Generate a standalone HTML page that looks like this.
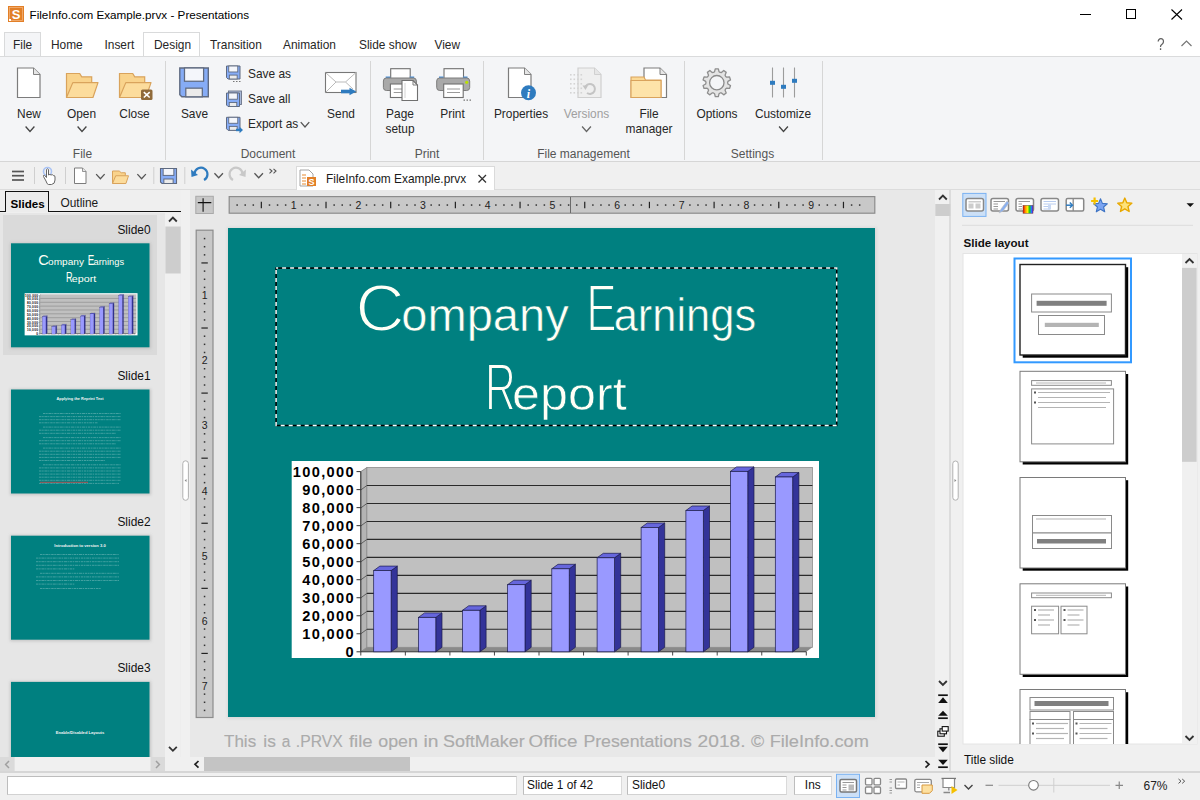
<!DOCTYPE html>
<html><head><meta charset="utf-8"><style>
html,body{margin:0;padding:0;width:1200px;height:800px;overflow:hidden;background:#f0f0f0}
body{position:relative;font-family:"Liberation Sans",sans-serif}
.t{position:absolute;white-space:nowrap}
.r{position:absolute}
svg.r{overflow:visible}
</style></head><body>
<div class="r" style="left:0px;top:0px;width:1200px;height:56px;background:#fff"></div>
<div class="t" style="left:29.5px;top:8.50px;font-size:11.7px;line-height:11.7px;color:#000;font-weight:normal;">FileInfo.com Example.prvx - Presentations</div>
<div class="r" style="left:1080px;top:14px;width:11px;height:1px;background:#000"></div>
<div class="r" style="left:1126px;top:9px;width:10px;height:10px;border:1px solid #000;box-sizing:border-box"></div>
<svg class="r" style="left:1171px;top:9px" width="12" height="11"><path d="M0.5 0.5 L11 10.5 M11 0.5 L0.5 10.5" stroke="#000" stroke-width="1.1" fill="none"/></svg>
<div class="r" style="left:3.5px;top:32px;width:37px;height:25px;background:#f4f5f7;border:1px solid #d9dadb;border-bottom:none;box-sizing:border-box"></div>
<div class="r" style="left:143px;top:32px;width:57px;height:25px;background:#fff;border:1px solid #d9dadb;border-bottom:none;box-sizing:border-box"></div>
<div class="t" style="left:13px;top:39.73px;font-size:11.9px;line-height:11.9px;color:#262626;font-weight:normal;">File</div>
<div class="t" style="left:51px;top:39.73px;font-size:11.9px;line-height:11.9px;color:#262626;font-weight:normal;">Home</div>
<div class="t" style="left:104.5px;top:39.73px;font-size:11.9px;line-height:11.9px;color:#262626;font-weight:normal;">Insert</div>
<div class="t" style="left:154px;top:39.73px;font-size:11.9px;line-height:11.9px;color:#262626;font-weight:normal;">Design</div>
<div class="t" style="left:210px;top:39.73px;font-size:11.9px;line-height:11.9px;color:#262626;font-weight:normal;">Transition</div>
<div class="t" style="left:283px;top:39.73px;font-size:11.9px;line-height:11.9px;color:#262626;font-weight:normal;">Animation</div>
<div class="t" style="left:359px;top:39.73px;font-size:11.9px;line-height:11.9px;color:#262626;font-weight:normal;">Slide show</div>
<div class="t" style="left:434.5px;top:39.73px;font-size:11.9px;line-height:11.9px;color:#262626;font-weight:normal;">View</div>
<div class="t" style="left:1157.3px;top:36.66px;font-size:16px;line-height:16px;color:#606060;font-weight:normal;transform:scaleX(0.85);transform-origin:0 0">?</div>
<svg class="r" style="left:1181px;top:40px" width="11" height="7"><path d="M0.5 6 L5.5 1 L10.5 6" stroke="#777" stroke-width="1.2" fill="none"/></svg>
<div class="r" style="left:0px;top:56px;width:1200px;height:106px;background:#f4f5f7;border-top:1px solid #dadbdc;border-bottom:1px solid #d6d6d6;box-sizing:border-box"></div>
<div class="r" style="left:164.5px;top:61px;width:1px;height:99px;background:#d6d6d6"></div>
<div class="r" style="left:370px;top:61px;width:1px;height:99px;background:#d6d6d6"></div>
<div class="r" style="left:482.5px;top:61px;width:1px;height:99px;background:#d6d6d6"></div>
<div class="r" style="left:684.2px;top:61px;width:1px;height:99px;background:#d6d6d6"></div>
<div class="r" style="left:822px;top:61px;width:1px;height:99px;background:#d6d6d6"></div>
<div class="t" style="left:-117.5px;width:400px;text-align:center;top:147.84px;font-size:12px;line-height:12px;color:#555;font-weight:normal;">File</div>
<div class="t" style="left:68px;width:400px;text-align:center;top:147.84px;font-size:12px;line-height:12px;color:#555;font-weight:normal;">Document</div>
<div class="t" style="left:227px;width:400px;text-align:center;top:147.84px;font-size:12px;line-height:12px;color:#555;font-weight:normal;">Print</div>
<div class="t" style="left:383.5px;width:400px;text-align:center;top:147.84px;font-size:12px;line-height:12px;color:#555;font-weight:normal;">File management</div>
<div class="t" style="left:552.5px;width:400px;text-align:center;top:147.84px;font-size:12px;line-height:12px;color:#555;font-weight:normal;">Settings</div>
<div class="t" style="left:-171px;width:400px;text-align:center;top:108.93px;font-size:11.9px;line-height:11.9px;color:#262626;font-weight:normal;">New</div>
<div class="t" style="left:-118.5px;width:400px;text-align:center;top:108.93px;font-size:11.9px;line-height:11.9px;color:#262626;font-weight:normal;">Open</div>
<div class="t" style="left:-65.5px;width:400px;text-align:center;top:108.93px;font-size:11.9px;line-height:11.9px;color:#262626;font-weight:normal;">Close</div>
<div class="t" style="left:-5.5px;width:400px;text-align:center;top:108.93px;font-size:11.9px;line-height:11.9px;color:#262626;font-weight:normal;">Save</div>
<div class="t" style="left:141px;width:400px;text-align:center;top:108.93px;font-size:11.9px;line-height:11.9px;color:#262626;font-weight:normal;">Send</div>
<div class="t" style="left:200px;width:400px;text-align:center;top:108.93px;font-size:11.9px;line-height:11.9px;color:#262626;font-weight:normal;">Page</div>
<div class="t" style="left:200px;width:400px;text-align:center;top:124.43px;font-size:11.9px;line-height:11.9px;color:#262626;font-weight:normal;">setup</div>
<div class="t" style="left:252.5px;width:400px;text-align:center;top:108.93px;font-size:11.9px;line-height:11.9px;color:#262626;font-weight:normal;">Print</div>
<div class="t" style="left:321px;width:400px;text-align:center;top:108.93px;font-size:11.9px;line-height:11.9px;color:#262626;font-weight:normal;">Properties</div>
<div class="t" style="left:386.5px;width:400px;text-align:center;top:108.93px;font-size:11.9px;line-height:11.9px;color:#a0a0a0;font-weight:normal;">Versions</div>
<div class="t" style="left:449px;width:400px;text-align:center;top:108.93px;font-size:11.9px;line-height:11.9px;color:#262626;font-weight:normal;">File</div>
<div class="t" style="left:449px;width:400px;text-align:center;top:124.43px;font-size:11.9px;line-height:11.9px;color:#262626;font-weight:normal;">manager</div>
<div class="t" style="left:517px;width:400px;text-align:center;top:108.93px;font-size:11.9px;line-height:11.9px;color:#262626;font-weight:normal;">Options</div>
<div class="t" style="left:583px;width:400px;text-align:center;top:108.93px;font-size:11.9px;line-height:11.9px;color:#262626;font-weight:normal;">Customize</div>
<div class="t" style="left:248px;top:68.93px;font-size:11.9px;line-height:11.9px;color:#262626;font-weight:normal;">Save as</div>
<div class="t" style="left:248px;top:93.93px;font-size:11.9px;line-height:11.9px;color:#262626;font-weight:normal;">Save all</div>
<div class="t" style="left:248px;top:118.93px;font-size:11.9px;line-height:11.9px;color:#262626;font-weight:normal;">Export as</div>
<div class="r" style="left:0px;top:162px;width:1200px;height:28px;background:#f0f0f0;border-bottom:1px solid #dcdcdc;box-sizing:border-box"></div>
<svg class="r" style="left:0;top:0" width="1200" height="800">
<rect x="8" y="6" width="16" height="16" fill="#e27f27"/>
<rect x="9.5" y="7.5" width="13" height="13" fill="none" stroke="#f2b27a" stroke-width="0.8"/>
<text x="16" y="19" font-family="Liberation Sans" font-weight="bold" font-size="13" fill="#fff" text-anchor="middle">S</text>
<rect x="9" y="19" width="2" height="2" fill="#fff"/>
<path d="M17.5 68 H33.5 L40.0 74.5 V97.5 H17.5 Z" fill="#fff" stroke="#7c7c7c" stroke-width="1.2"/><path d="M33.5 68 V74.5 H40.0" fill="#e6e6e6" stroke="#7c7c7c" stroke-width="0.96"/>
<path d="M25.60 126.50 L30.00 131.50 L34.40 126.50" stroke="#444" stroke-width="1.3" fill="none"/>
<path d="M66.5 97.5 V73.5 H79.73 L81.73 76.86 H91.7 V82.62" fill="#f9d38c" stroke="#d9a35c" stroke-width="1.2"/><path d="M66.5 97.5 L72.80 82.62 H98.0 L92.96 97.5 Z" fill="#fcdc9c" stroke="#d9a35c" stroke-width="1.2" stroke-linejoin="round"/>
<path d="M77.60 126.50 L82.00 131.50 L86.40 126.50" stroke="#444" stroke-width="1.3" fill="none"/>
<path d="M119.5 97.5 V73.5 H132.73 L134.73 76.86 H144.7 V82.62" fill="#f9d38c" stroke="#d9a35c" stroke-width="1.2"/><path d="M119.5 97.5 L125.80 82.62 H151.0 L145.96 97.5 Z" fill="#fcdc9c" stroke="#d9a35c" stroke-width="1.2" stroke-linejoin="round"/>
<rect x="141" y="89.5" width="11.5" height="10.5" rx="1.5" fill="#8f6a3a"/>
<path d="M143.8 92.2 L149.7 97.5 M149.7 92.2 L143.8 97.5" stroke="#fff" stroke-width="1.6"/>
<path d="M179.8 68 H208.3 V96.8 H181.8 L179.8 94.8 Z" fill="#86acf6" stroke="#5f6a80" stroke-width="1.4"/><rect x="184.50" y="68" width="19.10" height="13.25" fill="#f4f6fb" stroke="#5f6a80" stroke-width="1.26"/><rect x="185.79" y="88.16" width="16.53" height="8.64" fill="#ebebeb" stroke="#5f6a80" stroke-width="1.26"/>
<path d="M226.5 66 H240.0 V79 H228.0 L226.5 77.5 Z" fill="#86acf6" stroke="#5f6a80" stroke-width="1"/><rect x="228.73" y="66" width="9.04" height="5.98" fill="#f4f6fb" stroke="#5f6a80" stroke-width="0.9"/><rect x="229.34" y="75.10" width="7.83" height="3.90" fill="#ebebeb" stroke="#5f6a80" stroke-width="0.9"/>
<path d="M233 81.5 H234.5 M236 81.5 H237.5 M239 81.5 H240.5" stroke="#777" stroke-width="1.2"/>
<rect x="228.5" y="91" width="13" height="13.5" fill="#a9b9d8" stroke="#6b7488" stroke-width="0.9"/>
<path d="M226.5 93 H239.5 V106.5 H228.0 L226.5 105.0 Z" fill="#86acf6" stroke="#5f6a80" stroke-width="1"/><rect x="228.65" y="93" width="8.71" height="6.21" fill="#f4f6fb" stroke="#5f6a80" stroke-width="0.9"/><rect x="229.23" y="102.45" width="7.54" height="4.05" fill="#ebebeb" stroke="#5f6a80" stroke-width="0.9"/>
<path d="M226.5 117.3 H240.0 V130.3 H228.0 L226.5 128.8 Z" fill="#86acf6" stroke="#5f6a80" stroke-width="1"/><rect x="228.73" y="117.3" width="9.04" height="5.98" fill="#f4f6fb" stroke="#5f6a80" stroke-width="0.9"/><rect x="229.34" y="126.40" width="7.83" height="3.90" fill="#ebebeb" stroke="#5f6a80" stroke-width="0.9"/>
<path d="M236 130 H240" stroke="#2e7bbf" stroke-width="2.4"/><path d="M239.5 126.8 L243 130 L239.5 133.2 Z" fill="#2e7bbf"/>
<path d="M300.75 122.10 L305.00 126.90 L309.25 122.10" stroke="#555" stroke-width="1.3" fill="none"/>
<rect x="325.5" y="72.5" width="30.5" height="20" fill="#fff" stroke="#777" stroke-width="1.1"/>
<path d="M325.5 72.5 L336 82 H345.5 L356 72.5 M325.5 92.5 L336 82 M345.5 82 L353 89" stroke="#bbb" stroke-width="1" fill="none"/>
<path d="M341 91.5 H350" stroke="#2e7bbf" stroke-width="3.6"/><path d="M349.5 87.8 L356.3 91.5 L349.5 95.3 Z" fill="#2e7bbf"/>
<rect x="390.7" y="68.7" width="19.5" height="10" fill="#fff" stroke="#707070" stroke-width="1.1"/><rect x="385.7" y="76.5" width="4.5" height="2.5" fill="#4a8fd8"/><rect x="409.7" y="76.5" width="4.5" height="2.5" fill="#4a8fd8"/><rect x="383.4" y="78" width="33" height="12.5" rx="3" fill="#a9a9a9" stroke="#7d7d7d" stroke-width="1"/><rect x="390.4" y="84" width="19.5" height="13.5" fill="#fff" stroke="#707070" stroke-width="1.1"/><path d="M393.7 89 H406.7 M393.7 92.5 H406.7" stroke="#9a9a9a" stroke-width="1"/>
<path d="M402 80.5 H413 L417.5 85 V100.5 H402 Z" fill="#fff" stroke="#707070" stroke-width="1.1"/><path d="M413 80.5 V85 H417.5" fill="none" stroke="#707070" stroke-width="0.9"/><path d="M405 83 V98" stroke="#c8c8c8" stroke-width="0.8"/>
<rect x="444" y="68.7" width="19.5" height="10" fill="#fff" stroke="#707070" stroke-width="1.1"/><rect x="439" y="76.5" width="4.5" height="2.5" fill="#4a8fd8"/><rect x="463" y="76.5" width="4.5" height="2.5" fill="#4a8fd8"/><rect x="436.7" y="78" width="33" height="12.5" rx="3" fill="#a9a9a9" stroke="#7d7d7d" stroke-width="1"/><rect x="443.7" y="84" width="19.5" height="13.5" fill="#fff" stroke="#707070" stroke-width="1.1"/><path d="M447 89 H460 M447 92.5 H460" stroke="#9a9a9a" stroke-width="1"/><circle cx="466.7" cy="82.3" r="1.6" fill="#b8e000"/>
<path d="M463.5 100.2 H465 M466.5 100.2 H468 M469.5 100.2 H471" stroke="#777" stroke-width="1.2"/>
<path d="M508.5 68 H524.5 L531.0 74.5 V97.5 H508.5 Z" fill="#fff" stroke="#7c7c7c" stroke-width="1.2"/><path d="M524.5 68 V74.5 H531.0" fill="#e6e6e6" stroke="#7c7c7c" stroke-width="0.96"/>
<circle cx="528.5" cy="92.7" r="7.5" fill="#2e7bbf"/>
<text x="528.3" y="97.8" font-family="Liberation Serif" font-style="italic" font-weight="bold" font-size="12" fill="#fff" text-anchor="middle">i</text>
<path d="M578 68 H594.5 L601 74.5 V97.5 H578 Z" fill="#efefef" stroke="#cfcfcf" stroke-width="1.2"/><path d="M594.5 68 V74.5 H601" fill="#e6e6e6" stroke="#cfcfcf" stroke-width="0.96"/>
<rect x="570.0" y="74.0" width="1.6" height="1.6" fill="#d4d4d4"/>
<rect x="570.0" y="78.5" width="1.6" height="1.6" fill="#d4d4d4"/>
<rect x="570.0" y="83.0" width="1.6" height="1.6" fill="#d4d4d4"/>
<rect x="570.0" y="87.5" width="1.6" height="1.6" fill="#d4d4d4"/>
<rect x="570.0" y="92.0" width="1.6" height="1.6" fill="#d4d4d4"/>
<rect x="573.5" y="74.0" width="1.6" height="1.6" fill="#d4d4d4"/>
<rect x="573.5" y="78.5" width="1.6" height="1.6" fill="#d4d4d4"/>
<rect x="573.5" y="83.0" width="1.6" height="1.6" fill="#d4d4d4"/>
<rect x="573.5" y="87.5" width="1.6" height="1.6" fill="#d4d4d4"/>
<rect x="573.5" y="92.0" width="1.6" height="1.6" fill="#d4d4d4"/>
<rect x="577.0" y="74.0" width="1.6" height="1.6" fill="#d4d4d4"/>
<rect x="577.0" y="78.5" width="1.6" height="1.6" fill="#d4d4d4"/>
<rect x="577.0" y="83.0" width="1.6" height="1.6" fill="#d4d4d4"/>
<rect x="577.0" y="87.5" width="1.6" height="1.6" fill="#d4d4d4"/>
<rect x="577.0" y="92.0" width="1.6" height="1.6" fill="#d4d4d4"/>
<rect x="580.5" y="74.0" width="1.6" height="1.6" fill="#d4d4d4"/>
<rect x="580.5" y="78.5" width="1.6" height="1.6" fill="#d4d4d4"/>
<rect x="580.5" y="83.0" width="1.6" height="1.6" fill="#d4d4d4"/>
<rect x="580.5" y="87.5" width="1.6" height="1.6" fill="#d4d4d4"/>
<rect x="580.5" y="92.0" width="1.6" height="1.6" fill="#d4d4d4"/>
<path d="M585 88 A5 5 0 1 1 587 93" stroke="#c4c4c4" stroke-width="2" fill="none"/><path d="M582.5 85.5 L585.5 90 L588 85.5 Z" fill="#c4c4c4"/>
<path d="M582.10 126.50 L586.50 131.50 L590.90 126.50" stroke="#666" stroke-width="1.3" fill="none"/>
<path d="M644 68 H660.0 L666.5 74.5 V97.5 H644 Z" fill="#fff" stroke="#7c7c7c" stroke-width="1.2"/><path d="M660.0 68 V74.5 H666.5" fill="#e6e6e6" stroke="#7c7c7c" stroke-width="0.96"/>
<path d="M631 97.5 V77 H644 L645.5 80 H661 V97.5 Z" fill="#fbd996" stroke="#d9a35c" stroke-width="1.1"/>
<path d="M631 97.5 V80.5 H661 V97.5 Z" fill="#fde3a9" stroke="#d9a35c" stroke-width="1.1"/>
<polygon points="713.46,72.43 714.57,71.72 715.26,68.78 718.34,68.78 719.03,71.72 720.14,72.43 721.45,72.51 723.74,70.54 726.22,72.35 725.05,75.13 725.54,76.35 726.55,77.19 729.56,76.94 730.51,79.86 727.93,81.42 727.60,82.70 727.93,83.98 730.51,85.54 729.56,88.46 726.55,88.21 725.54,89.05 725.05,90.27 726.22,93.05 723.74,94.86 721.45,92.89 720.14,92.97 719.03,93.68 718.34,96.62 715.26,96.62 714.57,93.68 713.46,92.97 712.15,92.89 709.86,94.86 707.38,93.05 708.55,90.27 708.06,89.05 707.05,88.21 704.04,88.46 703.09,85.54 705.67,83.98 706.00,82.70 705.67,81.42 703.09,79.86 704.04,76.94 707.05,77.19 708.06,76.35 708.55,75.13 707.38,72.35 709.86,70.54 712.15,72.51" fill="#e4e4e4" stroke="#8e8e8e" stroke-width="1.3" stroke-linejoin="round"/>
<circle cx="716.8" cy="82.7" r="7.2" fill="#f4f5f7" stroke="#8a8a8a" stroke-width="1.3"/>
<path d="M772.5 67.5 V97.5" stroke="#9c9c9c" stroke-width="1.1"/><rect x="770.0" y="80.8" width="5" height="4" fill="#2e7bbf"/>
<path d="M783.5 67.5 V97.5" stroke="#9c9c9c" stroke-width="1.1"/><rect x="781.0" y="84.8" width="5" height="4" fill="#2e7bbf"/>
<path d="M794.5 67.5 V97.5" stroke="#9c9c9c" stroke-width="1.1"/><rect x="792.0" y="78.8" width="5" height="4" fill="#2e7bbf"/>
<path d="M779.10 126.50 L783.50 131.50 L787.90 126.50" stroke="#444" stroke-width="1.3" fill="none"/>
<path d="M12 171.5 H24" stroke="#555" stroke-width="1.7"/>
<path d="M12 175.7 H24" stroke="#555" stroke-width="1.7"/>
<path d="M12 180 H24" stroke="#555" stroke-width="1.7"/>
<path d="M34.5 167 V184" stroke="#cfcfcf" stroke-width="1"/>
<path d="M65.5 167 V184" stroke="#cfcfcf" stroke-width="1"/>
<path d="M153.8 167 V184" stroke="#cfcfcf" stroke-width="1"/>
<path d="M184.8 167 V184" stroke="#cfcfcf" stroke-width="1"/>
<circle cx="47.5" cy="171.5" r="4" fill="none" stroke="#a9c3f5" stroke-width="1.6"/>
<path d="M46 181 L43.5 176.5 Q43 175 44.5 175.3 L46.5 177.5 V169.5 Q47.5 168 48.5 169.5 V175 Q50 173.8 51 175 Q52.5 174 53.3 175.5 Q55 175.2 55 177 V180 Q55 184 51.5 184.5 H48.5 Q47 184.5 46 181 Z" fill="#fff" stroke="#666" stroke-width="1"/>
<path d="M74.5 168 H82.5 L86.0 171.5 V183.5 H74.5 Z" fill="#fff" stroke="#7c7c7c" stroke-width="1"/><path d="M82.5 168 V171.5 H86.0" fill="#e6e6e6" stroke="#7c7c7c" stroke-width="0.8"/>
<path d="M96.15 174.10 L100.40 178.70 L104.65 174.10" stroke="#555" stroke-width="1.3" fill="none"/>
<path d="M112.5 183.5 V171 H119.22 L121.22 172.75 H125.3 V175.75" fill="#f9d38c" stroke="#d9a35c" stroke-width="1"/><path d="M112.5 183.5 L115.70 175.75 H128.5 L125.94 183.5 Z" fill="#fcdc9c" stroke="#d9a35c" stroke-width="1" stroke-linejoin="round"/>
<path d="M137.35 174.10 L141.60 178.70 L145.85 174.10" stroke="#555" stroke-width="1.3" fill="none"/>
<path d="M160.5 168.5 H176.5 V183.5 H162.0 L160.5 182.0 Z" fill="#86acf6" stroke="#5f6a80" stroke-width="1.1"/><rect x="163.14" y="168.5" width="10.72" height="6.90" fill="#f4f6fb" stroke="#5f6a80" stroke-width="0.9900000000000001"/><rect x="163.86" y="179.00" width="9.28" height="4.50" fill="#ebebeb" stroke="#5f6a80" stroke-width="0.9900000000000001"/>
<path d="M204 180 A6.5 6.5 0 1 0 194.5 173.5" stroke="#2e7bbf" stroke-width="2.2" fill="none"/><path d="M191 169.5 L191.5 177 L198 175 Z" fill="#2e7bbf"/>
<path d="M214.45 173.20 L218.70 177.80 L222.95 173.20" stroke="#555" stroke-width="1.3" fill="none"/>
<path d="M233 180 A6.5 6.5 0 1 1 242.5 173.5" stroke="#c8c8c8" stroke-width="2.2" fill="none"/><path d="M246 169.5 L245.5 177 L239 175 Z" fill="#c8c8c8"/>
<path d="M254.45 173.20 L258.70 177.80 L262.95 173.20" stroke="#555" stroke-width="1.3" fill="none"/>
<path d="M269.5 168.8 L272 171 L269.5 173.3 M273.5 168.8 L276 171 L273.5 173.3" stroke="#555" stroke-width="1.1" fill="none"/>
</svg><div class="r" style="left:295.5px;top:166px;width:199.5px;height:24px;background:#fff;border:1px solid #dadada;border-bottom:none;box-sizing:border-box"></div><div class="t" style="left:326px;top:173.93px;font-size:11.9px;line-height:11.9px;color:#1a1a1a;font-weight:normal;">FileInfo.com Example.prvx</div><svg class="r" style="left:0;top:0" width="1" height="1"></svg><svg class="r" style="left:0;top:0" width="1200" height="200">
<path d="M300 170 H309 L313 174 V186 H300 Z" fill="#fff" stroke="#9a9a9a" stroke-width="0.9"/>
<path d="M302 175 H306 M302 178 H306 M302 181 H306 M302 184 H306" stroke="#e88a2e" stroke-width="1.2"/>
<rect x="307" y="177" width="9" height="9" fill="#e27f27"/><text x="311.5" y="185" font-family="Liberation Sans" font-weight="bold" font-size="9" fill="#fff" text-anchor="middle">S</text>
<path d="M478.5 175 L486 182.5 M486 175 L478.5 182.5" stroke="#333" stroke-width="1.3"/>
</svg>
<div class="r" style="left:0px;top:190px;width:181px;height:23px;background:#efefef"></div>
<div class="r" style="left:0px;top:213px;width:181px;height:544px;background:#e6e6e6"></div>
<div class="r" style="left:3px;top:215px;width:154px;height:140px;background:#dadada"></div>
<div class="r" style="left:0px;top:210.8px;width:181px;height:1.4px;background:#111"></div>
<div class="r" style="left:5.2px;top:191px;width:44px;height:21.3px;background:#ececec;border:1.7px solid #111;border-bottom:none;box-sizing:border-box"></div>
<div class="t" style="left:10.5px;top:197.98px;font-size:11.6px;line-height:11.6px;color:#000;font-weight:bold;">Slides</div>
<div class="t" style="left:60.5px;top:197.73px;font-size:11.9px;line-height:11.9px;color:#1a1a1a;font-weight:normal;">Outline</div>
<div class="t" style="left:-249.5px;width:400px;text-align:right;top:224.73px;font-size:11.9px;line-height:11.9px;color:#111;font-weight:normal;">Slide0</div>
<div class="t" style="left:-249.5px;width:400px;text-align:right;top:370.73px;font-size:11.9px;line-height:11.9px;color:#111;font-weight:normal;">Slide1</div>
<div class="t" style="left:-249.5px;width:400px;text-align:right;top:516.73px;font-size:11.9px;line-height:11.9px;color:#111;font-weight:normal;">Slide2</div>
<div class="t" style="left:-249.5px;width:400px;text-align:right;top:662.73px;font-size:11.9px;line-height:11.9px;color:#111;font-weight:normal;">Slide3</div>
<svg class="r" style="left:0;top:0" width="1200" height="800">
<defs><filter id="sh" x="-10%" y="-10%" width="120%" height="120%"><feGaussianBlur stdDeviation="1.5"/></filter><clipPath id="lp"><rect x="0" y="213" width="165" height="544"/></clipPath></defs>
<g clip-path="url(#lp)">
<rect x="10" y="242.8" width="141" height="106" fill="#bdbdbd" filter="url(#sh)" opacity="0.8"/>
<rect x="11" y="243.3" width="138.5" height="104" fill="#008080"/>
<rect x="10" y="389.0" width="141" height="106" fill="#bdbdbd" filter="url(#sh)" opacity="0.8"/>
<rect x="11" y="389.5" width="138.5" height="104" fill="#008080"/>
<rect x="10" y="535.2" width="141" height="106" fill="#bdbdbd" filter="url(#sh)" opacity="0.8"/>
<rect x="11" y="535.7" width="138.5" height="104" fill="#008080"/>
<rect x="10" y="681.4" width="141" height="106" fill="#bdbdbd" filter="url(#sh)" opacity="0.8"/>
<rect x="11" y="681.9" width="138.5" height="104" fill="#008080"/>
<g transform="translate(11 243.3) scale(0.2141) translate(-228 -228)"><g font-family="Liberation Sans" fill="#fffff6" stroke="#008080"><text x="100" y="331.5" font-size="67.5" stroke-width="0" transform="translate(254.820 0) scale(1.0075 1)">C</text><text x="100" y="331.5" font-size="46.5" stroke-width="0" transform="translate(299.883 0) scale(1.0133 1)">ompany</text><text x="100" y="331.5" font-size="67.5" stroke-width="0" transform="translate(518.624 0) scale(0.6757 1)">E</text><text x="100" y="331.5" font-size="46.5" stroke-width="0" transform="translate(520.285 0) scale(0.9341 1)">arnings</text><text x="100" y="409.8" font-size="67.5" stroke-width="0" transform="translate(421.949 0) scale(0.6297 1)">R</text><text x="100" y="409.8" font-size="46.5" stroke-width="0" transform="translate(403.900 0) scale(1.0816 1)">eport</text></g><rect x="291.7" y="461" width="527.3" height="197" fill="#fff"/><path d="M360.8 471.6 L366.9 467.5 V647.3 L360.8 651.8 Z" fill="#b4b4b4" stroke="#808080" stroke-width="0.8"/><rect x="366.9" y="467.5" width="445.5" height="179.8" fill="#c0c0c0" stroke="#8c8c8c" stroke-width="0.8"/><path d="M360.8 651.8 L366.9 647.3 H812.4 L806.3 651.8 Z" fill="#8a8a8a"/><path d="M366.9 485.48 H812.4" stroke="#2a2a2a" stroke-width="1.1"/><path d="M360.8 489.98 L366.9 485.48" stroke="#555" stroke-width="0.9"/><path d="M366.9 503.46 H812.4" stroke="#2a2a2a" stroke-width="1.1"/><path d="M360.8 507.96 L366.9 503.46" stroke="#555" stroke-width="0.9"/><path d="M366.9 521.44 H812.4" stroke="#2a2a2a" stroke-width="1.1"/><path d="M360.8 525.94 L366.9 521.44" stroke="#555" stroke-width="0.9"/><path d="M366.9 539.42 H812.4" stroke="#2a2a2a" stroke-width="1.1"/><path d="M360.8 543.92 L366.9 539.42" stroke="#555" stroke-width="0.9"/><path d="M366.9 557.40 H812.4" stroke="#2a2a2a" stroke-width="1.1"/><path d="M360.8 561.90 L366.9 557.40" stroke="#555" stroke-width="0.9"/><path d="M366.9 575.38 H812.4" stroke="#2a2a2a" stroke-width="1.1"/><path d="M360.8 579.88 L366.9 575.38" stroke="#555" stroke-width="0.9"/><path d="M366.9 593.36 H812.4" stroke="#2a2a2a" stroke-width="1.1"/><path d="M360.8 597.86 L366.9 593.36" stroke="#555" stroke-width="0.9"/><path d="M366.9 611.34 H812.4" stroke="#2a2a2a" stroke-width="1.1"/><path d="M360.8 615.84 L366.9 611.34" stroke="#555" stroke-width="0.9"/><path d="M366.9 629.32 H812.4" stroke="#2a2a2a" stroke-width="1.1"/><path d="M360.8 633.82 L366.9 629.32" stroke="#555" stroke-width="0.9"/><path d="M360.8 471.6 V651.8 H806.3" stroke="#333" stroke-width="1" fill="none"/><path d="M356.5 471.60 H360.8" stroke="#333" stroke-width="1"/><path d="M356.5 489.62 H360.8" stroke="#333" stroke-width="1"/><path d="M356.5 507.64 H360.8" stroke="#333" stroke-width="1"/><path d="M356.5 525.66 H360.8" stroke="#333" stroke-width="1"/><path d="M356.5 543.68 H360.8" stroke="#333" stroke-width="1"/><path d="M356.5 561.70 H360.8" stroke="#333" stroke-width="1"/><path d="M356.5 579.72 H360.8" stroke="#333" stroke-width="1"/><path d="M356.5 597.74 H360.8" stroke="#333" stroke-width="1"/><path d="M356.5 615.76 H360.8" stroke="#333" stroke-width="1"/><path d="M356.5 633.78 H360.8" stroke="#333" stroke-width="1"/><path d="M356.5 651.80 H360.8" stroke="#333" stroke-width="1"/><path d="M360.80 651.8 V655.5" stroke="#333" stroke-width="0.9"/><path d="M405.35 651.8 V655.5" stroke="#333" stroke-width="0.9"/><path d="M449.90 651.8 V655.5" stroke="#333" stroke-width="0.9"/><path d="M494.45 651.8 V655.5" stroke="#333" stroke-width="0.9"/><path d="M539.00 651.8 V655.5" stroke="#333" stroke-width="0.9"/><path d="M583.55 651.8 V655.5" stroke="#333" stroke-width="0.9"/><path d="M628.10 651.8 V655.5" stroke="#333" stroke-width="0.9"/><path d="M672.65 651.8 V655.5" stroke="#333" stroke-width="0.9"/><path d="M717.20 651.8 V655.5" stroke="#333" stroke-width="0.9"/><path d="M761.75 651.8 V655.5" stroke="#333" stroke-width="0.9"/><path d="M806.30 651.8 V655.5" stroke="#333" stroke-width="0.9"/><path d="M391.10 570.60 L397.30 566.10 V647.30 L391.10 651.80 Z" fill="#333399" stroke="#1a1a4a" stroke-width="0.7"/><path d="M373.70 570.60 L379.90 566.10 H397.30 L391.10 570.60 Z" fill="#6666dd" stroke="#1a1a4a" stroke-width="0.7"/><rect x="373.70" y="570.60" width="17.4" height="81.20" fill="#9999ff" stroke="#1a1a4a" stroke-width="0.7"/><path d="M435.80 617.40 L442.00 612.90 V647.30 L435.80 651.80 Z" fill="#333399" stroke="#1a1a4a" stroke-width="0.7"/><path d="M418.40 617.40 L424.60 612.90 H442.00 L435.80 617.40 Z" fill="#6666dd" stroke="#1a1a4a" stroke-width="0.7"/><rect x="418.40" y="617.40" width="17.4" height="34.40" fill="#9999ff" stroke="#1a1a4a" stroke-width="0.7"/><path d="M479.90 610.30 L486.10 605.80 V647.30 L479.90 651.80 Z" fill="#333399" stroke="#1a1a4a" stroke-width="0.7"/><path d="M462.50 610.30 L468.70 605.80 H486.10 L479.90 610.30 Z" fill="#6666dd" stroke="#1a1a4a" stroke-width="0.7"/><rect x="462.50" y="610.30" width="17.4" height="41.50" fill="#9999ff" stroke="#1a1a4a" stroke-width="0.7"/><path d="M525.00 584.70 L531.20 580.20 V647.30 L525.00 651.80 Z" fill="#333399" stroke="#1a1a4a" stroke-width="0.7"/><path d="M507.60 584.70 L513.80 580.20 H531.20 L525.00 584.70 Z" fill="#6666dd" stroke="#1a1a4a" stroke-width="0.7"/><rect x="507.60" y="584.70" width="17.4" height="67.10" fill="#9999ff" stroke="#1a1a4a" stroke-width="0.7"/><path d="M569.20 568.80 L575.40 564.30 V647.30 L569.20 651.80 Z" fill="#333399" stroke="#1a1a4a" stroke-width="0.7"/><path d="M551.80 568.80 L558.00 564.30 H575.40 L569.20 568.80 Z" fill="#6666dd" stroke="#1a1a4a" stroke-width="0.7"/><rect x="551.80" y="568.80" width="17.4" height="83.00" fill="#9999ff" stroke="#1a1a4a" stroke-width="0.7"/><path d="M614.50 557.80 L620.70 553.30 V647.30 L614.50 651.80 Z" fill="#333399" stroke="#1a1a4a" stroke-width="0.7"/><path d="M597.10 557.80 L603.30 553.30 H620.70 L614.50 557.80 Z" fill="#6666dd" stroke="#1a1a4a" stroke-width="0.7"/><rect x="597.10" y="557.80" width="17.4" height="94.00" fill="#9999ff" stroke="#1a1a4a" stroke-width="0.7"/><path d="M658.50 527.50 L664.70 523.00 V647.30 L658.50 651.80 Z" fill="#333399" stroke="#1a1a4a" stroke-width="0.7"/><path d="M641.10 527.50 L647.30 523.00 H664.70 L658.50 527.50 Z" fill="#6666dd" stroke="#1a1a4a" stroke-width="0.7"/><rect x="641.10" y="527.50" width="17.4" height="124.30" fill="#9999ff" stroke="#1a1a4a" stroke-width="0.7"/><path d="M703.30 510.50 L709.50 506.00 V647.30 L703.30 651.80 Z" fill="#333399" stroke="#1a1a4a" stroke-width="0.7"/><path d="M685.90 510.50 L692.10 506.00 H709.50 L703.30 510.50 Z" fill="#6666dd" stroke="#1a1a4a" stroke-width="0.7"/><rect x="685.90" y="510.50" width="17.4" height="141.30" fill="#9999ff" stroke="#1a1a4a" stroke-width="0.7"/><path d="M747.80 471.40 L754.00 466.90 V647.30 L747.80 651.80 Z" fill="#333399" stroke="#1a1a4a" stroke-width="0.7"/><path d="M730.40 471.40 L736.60 466.90 H754.00 L747.80 471.40 Z" fill="#6666dd" stroke="#1a1a4a" stroke-width="0.7"/><rect x="730.40" y="471.40" width="17.4" height="180.40" fill="#9999ff" stroke="#1a1a4a" stroke-width="0.7"/><path d="M792.70 477.00 L798.90 472.50 V647.30 L792.70 651.80 Z" fill="#333399" stroke="#1a1a4a" stroke-width="0.7"/><path d="M775.30 477.00 L781.50 472.50 H798.90 L792.70 477.00 Z" fill="#6666dd" stroke="#1a1a4a" stroke-width="0.7"/><rect x="775.30" y="477.00" width="17.4" height="174.80" fill="#9999ff" stroke="#1a1a4a" stroke-width="0.7"/><text x="355" y="476.70" text-anchor="end" font-family="Liberation Sans" font-weight="bold" font-size="14.6" letter-spacing="1.35" fill="#000">100,000</text><text x="355" y="494.72" text-anchor="end" font-family="Liberation Sans" font-weight="bold" font-size="14.6" letter-spacing="1.35" fill="#000">90,000</text><text x="355" y="512.74" text-anchor="end" font-family="Liberation Sans" font-weight="bold" font-size="14.6" letter-spacing="1.35" fill="#000">80,000</text><text x="355" y="530.76" text-anchor="end" font-family="Liberation Sans" font-weight="bold" font-size="14.6" letter-spacing="1.35" fill="#000">70,000</text><text x="355" y="548.78" text-anchor="end" font-family="Liberation Sans" font-weight="bold" font-size="14.6" letter-spacing="1.35" fill="#000">60,000</text><text x="355" y="566.80" text-anchor="end" font-family="Liberation Sans" font-weight="bold" font-size="14.6" letter-spacing="1.35" fill="#000">50,000</text><text x="355" y="584.82" text-anchor="end" font-family="Liberation Sans" font-weight="bold" font-size="14.6" letter-spacing="1.35" fill="#000">40,000</text><text x="355" y="602.84" text-anchor="end" font-family="Liberation Sans" font-weight="bold" font-size="14.6" letter-spacing="1.35" fill="#000">30,000</text><text x="355" y="620.86" text-anchor="end" font-family="Liberation Sans" font-weight="bold" font-size="14.6" letter-spacing="1.35" fill="#000">20,000</text><text x="355" y="638.88" text-anchor="end" font-family="Liberation Sans" font-weight="bold" font-size="14.6" letter-spacing="1.35" fill="#000">10,000</text><text x="355" y="656.90" text-anchor="end" font-family="Liberation Sans" font-weight="bold" font-size="14.6" letter-spacing="1.35" fill="#000">0</text></g>
<text x="80" y="400.3" text-anchor="middle" font-family="Liberation Sans" font-weight="bold" font-size="3.9" fill="#f4f4f4">Applying the Reprint Text</text>
<path d="M43 413.5 H121" stroke="rgba(255,255,255,0.26)" stroke-width="1" stroke-dasharray="2.5 0.6 1.6 0.7 3.2 0.6 1.2 0.8"/><path d="M39 416.6 H121" stroke="rgba(255,255,255,0.26)" stroke-width="1" stroke-dasharray="2.5 0.6 1.6 0.7 3.2 0.6 1.2 0.8"/><path d="M39 419.7 H121" stroke="rgba(255,255,255,0.26)" stroke-width="1" stroke-dasharray="2.5 0.6 1.6 0.7 3.2 0.6 1.2 0.8"/><path d="M39 422.8 H98" stroke="rgba(255,255,255,0.26)" stroke-width="1" stroke-dasharray="2.5 0.6 1.6 0.7 3.2 0.6 1.2 0.8"/><path d="M43 427.1 H121" stroke="rgba(255,255,255,0.26)" stroke-width="1" stroke-dasharray="2.5 0.6 1.6 0.7 3.2 0.6 1.2 0.8"/><path d="M39 430.2 H121" stroke="rgba(255,255,255,0.26)" stroke-width="1" stroke-dasharray="2.5 0.6 1.6 0.7 3.2 0.6 1.2 0.8"/><path d="M39 433.3 H116" stroke="rgba(255,255,255,0.26)" stroke-width="1" stroke-dasharray="2.5 0.6 1.6 0.7 3.2 0.6 1.2 0.8"/><path d="M43 437.6 H121" stroke="rgba(255,255,255,0.26)" stroke-width="1" stroke-dasharray="2.5 0.6 1.6 0.7 3.2 0.6 1.2 0.8"/><path d="M39 440.7 H121" stroke="rgba(255,255,255,0.26)" stroke-width="1" stroke-dasharray="2.5 0.6 1.6 0.7 3.2 0.6 1.2 0.8"/><path d="M39 443.8 H116" stroke="rgba(255,255,255,0.26)" stroke-width="1" stroke-dasharray="2.5 0.6 1.6 0.7 3.2 0.6 1.2 0.8"/><path d="M43 448.1 H121" stroke="rgba(255,255,255,0.26)" stroke-width="1" stroke-dasharray="2.5 0.6 1.6 0.7 3.2 0.6 1.2 0.8"/><path d="M39 451.2 H121" stroke="rgba(255,255,255,0.26)" stroke-width="1" stroke-dasharray="2.5 0.6 1.6 0.7 3.2 0.6 1.2 0.8"/><path d="M39 454.3 H121" stroke="rgba(255,255,255,0.26)" stroke-width="1" stroke-dasharray="2.5 0.6 1.6 0.7 3.2 0.6 1.2 0.8"/><path d="M39 457.4 H121" stroke="rgba(255,255,255,0.26)" stroke-width="1" stroke-dasharray="2.5 0.6 1.6 0.7 3.2 0.6 1.2 0.8"/><path d="M39 460.5 H105" stroke="rgba(255,255,255,0.26)" stroke-width="1" stroke-dasharray="2.5 0.6 1.6 0.7 3.2 0.6 1.2 0.8"/><path d="M43 464.8 H121" stroke="rgba(255,255,255,0.26)" stroke-width="1" stroke-dasharray="2.5 0.6 1.6 0.7 3.2 0.6 1.2 0.8"/><path d="M39 467.9 H121" stroke="rgba(255,255,255,0.26)" stroke-width="1" stroke-dasharray="2.5 0.6 1.6 0.7 3.2 0.6 1.2 0.8"/><path d="M39 471.0 H121" stroke="rgba(255,255,255,0.26)" stroke-width="1" stroke-dasharray="2.5 0.6 1.6 0.7 3.2 0.6 1.2 0.8"/><path d="M39 474.1 H121" stroke="rgba(255,255,255,0.26)" stroke-width="1" stroke-dasharray="2.5 0.6 1.6 0.7 3.2 0.6 1.2 0.8"/><path d="M39 477.2 H121" stroke="rgba(255,255,255,0.26)" stroke-width="1" stroke-dasharray="2.5 0.6 1.6 0.7 3.2 0.6 1.2 0.8"/><path d="M39 480.3 H121" stroke="rgba(255,255,255,0.26)" stroke-width="1" stroke-dasharray="2.5 0.6 1.6 0.7 3.2 0.6 1.2 0.8"/><path d="M39 483.4 H119" stroke="rgba(255,255,255,0.26)" stroke-width="1" stroke-dasharray="2.5 0.6 1.6 0.7 3.2 0.6 1.2 0.8"/>
<path d="M40 482.3 H88" stroke="#c05050" stroke-width="0.9"/>
<text x="80" y="546.8" text-anchor="middle" font-family="Liberation Sans" font-weight="bold" font-size="4.1" fill="#f4f4f4">Introduction to version 3.0</text>
<path d="M40 554.5 H119" stroke="rgba(255,255,255,0.26)" stroke-width="1" stroke-dasharray="2.5 0.6 1.6 0.7 3.2 0.6 1.2 0.8"/><path d="M36 558.1 H119" stroke="rgba(255,255,255,0.26)" stroke-width="1" stroke-dasharray="2.5 0.6 1.6 0.7 3.2 0.6 1.2 0.8"/><path d="M36 561.7 H119" stroke="rgba(255,255,255,0.26)" stroke-width="1" stroke-dasharray="2.5 0.6 1.6 0.7 3.2 0.6 1.2 0.8"/><path d="M36 565.3 H119" stroke="rgba(255,255,255,0.26)" stroke-width="1" stroke-dasharray="2.5 0.6 1.6 0.7 3.2 0.6 1.2 0.8"/><path d="M36 568.9 H75" stroke="rgba(255,255,255,0.26)" stroke-width="1" stroke-dasharray="2.5 0.6 1.6 0.7 3.2 0.6 1.2 0.8"/><path d="M40 573.3 H119" stroke="rgba(255,255,255,0.26)" stroke-width="1" stroke-dasharray="2.5 0.6 1.6 0.7 3.2 0.6 1.2 0.8"/><path d="M36 576.9 H119" stroke="rgba(255,255,255,0.26)" stroke-width="1" stroke-dasharray="2.5 0.6 1.6 0.7 3.2 0.6 1.2 0.8"/><path d="M36 580.5 H119" stroke="rgba(255,255,255,0.26)" stroke-width="1" stroke-dasharray="2.5 0.6 1.6 0.7 3.2 0.6 1.2 0.8"/><path d="M36 584.1 H75" stroke="rgba(255,255,255,0.26)" stroke-width="1" stroke-dasharray="2.5 0.6 1.6 0.7 3.2 0.6 1.2 0.8"/><path d="M40 588.5 H101" stroke="rgba(255,255,255,0.26)" stroke-width="1" stroke-dasharray="2.5 0.6 1.6 0.7 3.2 0.6 1.2 0.8"/>
<text x="80" y="733.8" text-anchor="middle" font-family="Liberation Sans" font-weight="bold" font-size="4.1" fill="#f4f4f4">Enable/Disabled Layouts</text>
</g>
<rect x="165" y="213" width="15.7" height="544" fill="#f0f0f0"/>
<rect x="165.4" y="226.5" width="15.3" height="47" fill="#cdcdcd"/>
<path d="M169 221.5 L172.9 217.5 L176.8 221.5" stroke="#333" stroke-width="1.8" fill="none"/>
<path d="M169 746.8 L172.9 750.8 L176.8 746.8" stroke="#333" stroke-width="1.8" fill="none"/>
<rect x="0" y="757" width="181" height="15" fill="#f0f0f0"/>
<rect x="0" y="757" width="14.6" height="15" fill="#dadada"/>
<rect x="150.5" y="757" width="14.5" height="15" fill="#dadada"/>
<path d="M9 761 L5.6 764.5 L9 768" stroke="#a0a0a0" stroke-width="1.5" fill="none"/>
<path d="M156 761 L159.4 764.5 L156 768" stroke="#a0a0a0" stroke-width="1.5" fill="none"/>
</svg>
<div class="r" style="left:181px;top:190px;width:9px;height:582px;background:#f0f0f0"></div>
<div class="r" style="left:190px;top:190px;width:745px;height:567px;background:#e8e8e8"></div>
<svg class="r" style="left:0;top:0" width="1200" height="800">
<rect x="182.8" y="460.8" width="5.6" height="39.5" rx="2.8" fill="#fff" stroke="#a8a8a8" stroke-width="0.9"/>
<path d="M186.5 479 L184.6 480.5 L186.5 482" fill="#888"/>
<rect x="195.8" y="196.3" width="17.5" height="17.2" fill="#c8c8c8" stroke="#a9a9a9" stroke-width="1"/>
<path d="M197.8 202.6 H211.3 M203.1 198.3 V211.8" stroke="#111" stroke-width="1.1"/>
<rect x="229.2" y="196.6" width="645.6" height="16.6" fill="#c8c8c8" stroke="#8c8c8c" stroke-width="1.2"/>
<path d="M570.5 197 V213" stroke="#6a6a6a" stroke-width="1"/>
<rect x="236.39" y="204.3" width="1.5" height="1.5" fill="#333"/>
<rect x="244.47" y="204.3" width="1.5" height="1.5" fill="#333"/>
<rect x="252.56" y="204.3" width="1.5" height="1.5" fill="#333"/>
<path d="M261.34 201.8 V208.2" stroke="#222" stroke-width="1.2"/>
<rect x="268.73" y="204.3" width="1.5" height="1.5" fill="#333"/>
<rect x="276.81" y="204.3" width="1.5" height="1.5" fill="#333"/>
<rect x="284.90" y="204.3" width="1.5" height="1.5" fill="#333"/>
<text x="293.68" y="209" text-anchor="middle" font-family="Liberation Sans" font-size="10.5" fill="#222">1</text>
<rect x="301.06" y="204.3" width="1.5" height="1.5" fill="#333"/>
<rect x="309.15" y="204.3" width="1.5" height="1.5" fill="#333"/>
<rect x="317.24" y="204.3" width="1.5" height="1.5" fill="#333"/>
<path d="M326.02 201.8 V208.2" stroke="#222" stroke-width="1.2"/>
<rect x="333.41" y="204.3" width="1.5" height="1.5" fill="#333"/>
<rect x="341.49" y="204.3" width="1.5" height="1.5" fill="#333"/>
<rect x="349.57" y="204.3" width="1.5" height="1.5" fill="#333"/>
<text x="358.36" y="209" text-anchor="middle" font-family="Liberation Sans" font-size="10.5" fill="#222">2</text>
<rect x="365.75" y="204.3" width="1.5" height="1.5" fill="#333"/>
<rect x="373.83" y="204.3" width="1.5" height="1.5" fill="#333"/>
<rect x="381.92" y="204.3" width="1.5" height="1.5" fill="#333"/>
<path d="M390.70 201.8 V208.2" stroke="#222" stroke-width="1.2"/>
<rect x="398.09" y="204.3" width="1.5" height="1.5" fill="#333"/>
<rect x="406.17" y="204.3" width="1.5" height="1.5" fill="#333"/>
<rect x="414.26" y="204.3" width="1.5" height="1.5" fill="#333"/>
<text x="423.04" y="209" text-anchor="middle" font-family="Liberation Sans" font-size="10.5" fill="#222">3</text>
<rect x="430.43" y="204.3" width="1.5" height="1.5" fill="#333"/>
<rect x="438.51" y="204.3" width="1.5" height="1.5" fill="#333"/>
<rect x="446.60" y="204.3" width="1.5" height="1.5" fill="#333"/>
<path d="M455.38 201.8 V208.2" stroke="#222" stroke-width="1.2"/>
<rect x="462.77" y="204.3" width="1.5" height="1.5" fill="#333"/>
<rect x="470.85" y="204.3" width="1.5" height="1.5" fill="#333"/>
<rect x="478.94" y="204.3" width="1.5" height="1.5" fill="#333"/>
<text x="487.72" y="209" text-anchor="middle" font-family="Liberation Sans" font-size="10.5" fill="#222">4</text>
<rect x="495.11" y="204.3" width="1.5" height="1.5" fill="#333"/>
<rect x="503.19" y="204.3" width="1.5" height="1.5" fill="#333"/>
<rect x="511.28" y="204.3" width="1.5" height="1.5" fill="#333"/>
<path d="M520.06 201.8 V208.2" stroke="#222" stroke-width="1.2"/>
<rect x="527.44" y="204.3" width="1.5" height="1.5" fill="#333"/>
<rect x="535.53" y="204.3" width="1.5" height="1.5" fill="#333"/>
<rect x="543.62" y="204.3" width="1.5" height="1.5" fill="#333"/>
<text x="552.40" y="209" text-anchor="middle" font-family="Liberation Sans" font-size="10.5" fill="#222">5</text>
<rect x="559.78" y="204.3" width="1.5" height="1.5" fill="#333"/>
<rect x="567.87" y="204.3" width="1.5" height="1.5" fill="#333"/>
<rect x="575.95" y="204.3" width="1.5" height="1.5" fill="#333"/>
<path d="M584.74 201.8 V208.2" stroke="#222" stroke-width="1.2"/>
<rect x="592.12" y="204.3" width="1.5" height="1.5" fill="#333"/>
<rect x="600.21" y="204.3" width="1.5" height="1.5" fill="#333"/>
<rect x="608.30" y="204.3" width="1.5" height="1.5" fill="#333"/>
<text x="617.08" y="209" text-anchor="middle" font-family="Liberation Sans" font-size="10.5" fill="#222">6</text>
<rect x="624.46" y="204.3" width="1.5" height="1.5" fill="#333"/>
<rect x="632.55" y="204.3" width="1.5" height="1.5" fill="#333"/>
<rect x="640.63" y="204.3" width="1.5" height="1.5" fill="#333"/>
<path d="M649.42 201.8 V208.2" stroke="#222" stroke-width="1.2"/>
<rect x="656.81" y="204.3" width="1.5" height="1.5" fill="#333"/>
<rect x="664.89" y="204.3" width="1.5" height="1.5" fill="#333"/>
<rect x="672.98" y="204.3" width="1.5" height="1.5" fill="#333"/>
<text x="681.76" y="209" text-anchor="middle" font-family="Liberation Sans" font-size="10.5" fill="#222">7</text>
<rect x="689.14" y="204.3" width="1.5" height="1.5" fill="#333"/>
<rect x="697.23" y="204.3" width="1.5" height="1.5" fill="#333"/>
<rect x="705.32" y="204.3" width="1.5" height="1.5" fill="#333"/>
<path d="M714.10 201.8 V208.2" stroke="#222" stroke-width="1.2"/>
<rect x="721.49" y="204.3" width="1.5" height="1.5" fill="#333"/>
<rect x="729.57" y="204.3" width="1.5" height="1.5" fill="#333"/>
<rect x="737.65" y="204.3" width="1.5" height="1.5" fill="#333"/>
<text x="746.44" y="209" text-anchor="middle" font-family="Liberation Sans" font-size="10.5" fill="#222">8</text>
<rect x="753.83" y="204.3" width="1.5" height="1.5" fill="#333"/>
<rect x="761.91" y="204.3" width="1.5" height="1.5" fill="#333"/>
<rect x="770.00" y="204.3" width="1.5" height="1.5" fill="#333"/>
<path d="M778.78 201.8 V208.2" stroke="#222" stroke-width="1.2"/>
<rect x="786.16" y="204.3" width="1.5" height="1.5" fill="#333"/>
<rect x="794.25" y="204.3" width="1.5" height="1.5" fill="#333"/>
<rect x="802.34" y="204.3" width="1.5" height="1.5" fill="#333"/>
<text x="811.12" y="209" text-anchor="middle" font-family="Liberation Sans" font-size="10.5" fill="#222">9</text>
<rect x="818.50" y="204.3" width="1.5" height="1.5" fill="#333"/>
<rect x="826.59" y="204.3" width="1.5" height="1.5" fill="#333"/>
<rect x="834.68" y="204.3" width="1.5" height="1.5" fill="#333"/>
<path d="M843.46 201.8 V208.2" stroke="#222" stroke-width="1.2"/>
<rect x="850.85" y="204.3" width="1.5" height="1.5" fill="#333"/>
<rect x="858.93" y="204.3" width="1.5" height="1.5" fill="#333"/>
<rect x="196.2" y="230.2" width="16.8" height="487.3" fill="#c8c8c8" stroke="#8c8c8c" stroke-width="1.2"/>
<rect x="203.8" y="237.84" width="1.5" height="1.5" fill="#333"/>
<rect x="203.8" y="245.97" width="1.5" height="1.5" fill="#333"/>
<rect x="203.8" y="254.11" width="1.5" height="1.5" fill="#333"/>
<path d="M201.4 262.94 H207.8" stroke="#222" stroke-width="1.2"/>
<rect x="203.8" y="270.38" width="1.5" height="1.5" fill="#333"/>
<rect x="203.8" y="278.51" width="1.5" height="1.5" fill="#333"/>
<rect x="203.8" y="286.65" width="1.5" height="1.5" fill="#333"/>
<text x="204.6" y="299.28" text-anchor="middle" font-family="Liberation Sans" font-size="10.5" fill="#222">1</text>
<rect x="203.8" y="302.92" width="1.5" height="1.5" fill="#333"/>
<rect x="203.8" y="311.05" width="1.5" height="1.5" fill="#333"/>
<rect x="203.8" y="319.19" width="1.5" height="1.5" fill="#333"/>
<path d="M201.4 328.02 H207.8" stroke="#222" stroke-width="1.2"/>
<rect x="203.8" y="335.45" width="1.5" height="1.5" fill="#333"/>
<rect x="203.8" y="343.59" width="1.5" height="1.5" fill="#333"/>
<rect x="203.8" y="351.73" width="1.5" height="1.5" fill="#333"/>
<text x="204.6" y="364.36" text-anchor="middle" font-family="Liberation Sans" font-size="10.5" fill="#222">2</text>
<rect x="203.8" y="368.00" width="1.5" height="1.5" fill="#333"/>
<rect x="203.8" y="376.13" width="1.5" height="1.5" fill="#333"/>
<rect x="203.8" y="384.27" width="1.5" height="1.5" fill="#333"/>
<path d="M201.4 393.10 H207.8" stroke="#222" stroke-width="1.2"/>
<rect x="203.8" y="400.54" width="1.5" height="1.5" fill="#333"/>
<rect x="203.8" y="408.67" width="1.5" height="1.5" fill="#333"/>
<rect x="203.8" y="416.81" width="1.5" height="1.5" fill="#333"/>
<text x="204.6" y="429.44" text-anchor="middle" font-family="Liberation Sans" font-size="10.5" fill="#222">3</text>
<rect x="203.8" y="433.07" width="1.5" height="1.5" fill="#333"/>
<rect x="203.8" y="441.21" width="1.5" height="1.5" fill="#333"/>
<rect x="203.8" y="449.34" width="1.5" height="1.5" fill="#333"/>
<path d="M201.4 458.18 H207.8" stroke="#222" stroke-width="1.2"/>
<rect x="203.8" y="465.62" width="1.5" height="1.5" fill="#333"/>
<rect x="203.8" y="473.75" width="1.5" height="1.5" fill="#333"/>
<rect x="203.8" y="481.89" width="1.5" height="1.5" fill="#333"/>
<text x="204.6" y="494.52" text-anchor="middle" font-family="Liberation Sans" font-size="10.5" fill="#222">4</text>
<rect x="203.8" y="498.16" width="1.5" height="1.5" fill="#333"/>
<rect x="203.8" y="506.29" width="1.5" height="1.5" fill="#333"/>
<rect x="203.8" y="514.42" width="1.5" height="1.5" fill="#333"/>
<path d="M201.4 523.26 H207.8" stroke="#222" stroke-width="1.2"/>
<rect x="203.8" y="530.69" width="1.5" height="1.5" fill="#333"/>
<rect x="203.8" y="538.83" width="1.5" height="1.5" fill="#333"/>
<rect x="203.8" y="546.96" width="1.5" height="1.5" fill="#333"/>
<text x="204.6" y="559.60" text-anchor="middle" font-family="Liberation Sans" font-size="10.5" fill="#222">5</text>
<rect x="203.8" y="563.23" width="1.5" height="1.5" fill="#333"/>
<rect x="203.8" y="571.37" width="1.5" height="1.5" fill="#333"/>
<rect x="203.8" y="579.50" width="1.5" height="1.5" fill="#333"/>
<path d="M201.4 588.34 H207.8" stroke="#222" stroke-width="1.2"/>
<rect x="203.8" y="595.77" width="1.5" height="1.5" fill="#333"/>
<rect x="203.8" y="603.91" width="1.5" height="1.5" fill="#333"/>
<rect x="203.8" y="612.04" width="1.5" height="1.5" fill="#333"/>
<text x="204.6" y="624.68" text-anchor="middle" font-family="Liberation Sans" font-size="10.5" fill="#222">6</text>
<rect x="203.8" y="628.31" width="1.5" height="1.5" fill="#333"/>
<rect x="203.8" y="636.45" width="1.5" height="1.5" fill="#333"/>
<rect x="203.8" y="644.58" width="1.5" height="1.5" fill="#333"/>
<path d="M201.4 653.42 H207.8" stroke="#222" stroke-width="1.2"/>
<rect x="203.8" y="660.85" width="1.5" height="1.5" fill="#333"/>
<rect x="203.8" y="668.99" width="1.5" height="1.5" fill="#333"/>
<rect x="203.8" y="677.12" width="1.5" height="1.5" fill="#333"/>
<text x="204.6" y="689.76" text-anchor="middle" font-family="Liberation Sans" font-size="10.5" fill="#222">7</text>
<rect x="203.8" y="693.39" width="1.5" height="1.5" fill="#333"/>
<rect x="203.8" y="701.53" width="1.5" height="1.5" fill="#333"/>
<rect x="203.8" y="709.66" width="1.5" height="1.5" fill="#333"/>
<rect x="227" y="227" width="650" height="492" fill="#d4d4d4" filter="url(#sh)" opacity="0.7"/>
<rect x="228" y="228" width="647" height="489" fill="#008080"/>
<rect x="276.1" y="268.1" width="560.6" height="157.4" fill="none" stroke="#000" stroke-width="1.5"/>
<rect x="276.1" y="268.1" width="560.6" height="157.4" fill="none" stroke="#f4ffff" stroke-width="1.5" stroke-dasharray="4 4" stroke-dashoffset="2"/>
</svg>
<svg class="r" style="left:0;top:0" width="1200" height="800"><g font-family="Liberation Sans" fill="#fffff6" stroke="#008080"><text x="100" y="331.5" font-size="67.5" stroke-width="1.9" transform="translate(254.820 0) scale(1.0075 1)">C</text><text x="100" y="331.5" font-size="46.5" stroke-width="0.6" transform="translate(299.883 0) scale(1.0133 1)">ompany</text><text x="100" y="331.5" font-size="67.5" stroke-width="1.9" transform="translate(518.624 0) scale(0.6757 1)">E</text><text x="100" y="331.5" font-size="46.5" stroke-width="0.6" transform="translate(520.285 0) scale(0.9341 1)">arnings</text><text x="100" y="409.8" font-size="67.5" stroke-width="1.9" transform="translate(421.949 0) scale(0.6297 1)">R</text><text x="100" y="409.8" font-size="46.5" stroke-width="0.6" transform="translate(403.900 0) scale(1.0816 1)">eport</text></g></svg>
<svg class="r" style="left:0;top:0" width="1200" height="800"><rect x="291.7" y="461" width="527.3" height="197" fill="#fff"/><path d="M360.8 471.6 L366.9 467.5 V647.3 L360.8 651.8 Z" fill="#b4b4b4" stroke="#808080" stroke-width="0.8"/><rect x="366.9" y="467.5" width="445.5" height="179.8" fill="#c0c0c0" stroke="#8c8c8c" stroke-width="0.8"/><path d="M360.8 651.8 L366.9 647.3 H812.4 L806.3 651.8 Z" fill="#8a8a8a"/><path d="M366.9 485.48 H812.4" stroke="#2a2a2a" stroke-width="1.1"/><path d="M360.8 489.98 L366.9 485.48" stroke="#555" stroke-width="0.9"/><path d="M366.9 503.46 H812.4" stroke="#2a2a2a" stroke-width="1.1"/><path d="M360.8 507.96 L366.9 503.46" stroke="#555" stroke-width="0.9"/><path d="M366.9 521.44 H812.4" stroke="#2a2a2a" stroke-width="1.1"/><path d="M360.8 525.94 L366.9 521.44" stroke="#555" stroke-width="0.9"/><path d="M366.9 539.42 H812.4" stroke="#2a2a2a" stroke-width="1.1"/><path d="M360.8 543.92 L366.9 539.42" stroke="#555" stroke-width="0.9"/><path d="M366.9 557.40 H812.4" stroke="#2a2a2a" stroke-width="1.1"/><path d="M360.8 561.90 L366.9 557.40" stroke="#555" stroke-width="0.9"/><path d="M366.9 575.38 H812.4" stroke="#2a2a2a" stroke-width="1.1"/><path d="M360.8 579.88 L366.9 575.38" stroke="#555" stroke-width="0.9"/><path d="M366.9 593.36 H812.4" stroke="#2a2a2a" stroke-width="1.1"/><path d="M360.8 597.86 L366.9 593.36" stroke="#555" stroke-width="0.9"/><path d="M366.9 611.34 H812.4" stroke="#2a2a2a" stroke-width="1.1"/><path d="M360.8 615.84 L366.9 611.34" stroke="#555" stroke-width="0.9"/><path d="M366.9 629.32 H812.4" stroke="#2a2a2a" stroke-width="1.1"/><path d="M360.8 633.82 L366.9 629.32" stroke="#555" stroke-width="0.9"/><path d="M360.8 471.6 V651.8 H806.3" stroke="#333" stroke-width="1" fill="none"/><path d="M356.5 471.60 H360.8" stroke="#333" stroke-width="1"/><path d="M356.5 489.62 H360.8" stroke="#333" stroke-width="1"/><path d="M356.5 507.64 H360.8" stroke="#333" stroke-width="1"/><path d="M356.5 525.66 H360.8" stroke="#333" stroke-width="1"/><path d="M356.5 543.68 H360.8" stroke="#333" stroke-width="1"/><path d="M356.5 561.70 H360.8" stroke="#333" stroke-width="1"/><path d="M356.5 579.72 H360.8" stroke="#333" stroke-width="1"/><path d="M356.5 597.74 H360.8" stroke="#333" stroke-width="1"/><path d="M356.5 615.76 H360.8" stroke="#333" stroke-width="1"/><path d="M356.5 633.78 H360.8" stroke="#333" stroke-width="1"/><path d="M356.5 651.80 H360.8" stroke="#333" stroke-width="1"/><path d="M360.80 651.8 V655.5" stroke="#333" stroke-width="0.9"/><path d="M405.35 651.8 V655.5" stroke="#333" stroke-width="0.9"/><path d="M449.90 651.8 V655.5" stroke="#333" stroke-width="0.9"/><path d="M494.45 651.8 V655.5" stroke="#333" stroke-width="0.9"/><path d="M539.00 651.8 V655.5" stroke="#333" stroke-width="0.9"/><path d="M583.55 651.8 V655.5" stroke="#333" stroke-width="0.9"/><path d="M628.10 651.8 V655.5" stroke="#333" stroke-width="0.9"/><path d="M672.65 651.8 V655.5" stroke="#333" stroke-width="0.9"/><path d="M717.20 651.8 V655.5" stroke="#333" stroke-width="0.9"/><path d="M761.75 651.8 V655.5" stroke="#333" stroke-width="0.9"/><path d="M806.30 651.8 V655.5" stroke="#333" stroke-width="0.9"/><path d="M391.10 570.60 L397.30 566.10 V647.30 L391.10 651.80 Z" fill="#333399" stroke="#1a1a4a" stroke-width="0.7"/><path d="M373.70 570.60 L379.90 566.10 H397.30 L391.10 570.60 Z" fill="#6666dd" stroke="#1a1a4a" stroke-width="0.7"/><rect x="373.70" y="570.60" width="17.4" height="81.20" fill="#9999ff" stroke="#1a1a4a" stroke-width="0.7"/><path d="M435.80 617.40 L442.00 612.90 V647.30 L435.80 651.80 Z" fill="#333399" stroke="#1a1a4a" stroke-width="0.7"/><path d="M418.40 617.40 L424.60 612.90 H442.00 L435.80 617.40 Z" fill="#6666dd" stroke="#1a1a4a" stroke-width="0.7"/><rect x="418.40" y="617.40" width="17.4" height="34.40" fill="#9999ff" stroke="#1a1a4a" stroke-width="0.7"/><path d="M479.90 610.30 L486.10 605.80 V647.30 L479.90 651.80 Z" fill="#333399" stroke="#1a1a4a" stroke-width="0.7"/><path d="M462.50 610.30 L468.70 605.80 H486.10 L479.90 610.30 Z" fill="#6666dd" stroke="#1a1a4a" stroke-width="0.7"/><rect x="462.50" y="610.30" width="17.4" height="41.50" fill="#9999ff" stroke="#1a1a4a" stroke-width="0.7"/><path d="M525.00 584.70 L531.20 580.20 V647.30 L525.00 651.80 Z" fill="#333399" stroke="#1a1a4a" stroke-width="0.7"/><path d="M507.60 584.70 L513.80 580.20 H531.20 L525.00 584.70 Z" fill="#6666dd" stroke="#1a1a4a" stroke-width="0.7"/><rect x="507.60" y="584.70" width="17.4" height="67.10" fill="#9999ff" stroke="#1a1a4a" stroke-width="0.7"/><path d="M569.20 568.80 L575.40 564.30 V647.30 L569.20 651.80 Z" fill="#333399" stroke="#1a1a4a" stroke-width="0.7"/><path d="M551.80 568.80 L558.00 564.30 H575.40 L569.20 568.80 Z" fill="#6666dd" stroke="#1a1a4a" stroke-width="0.7"/><rect x="551.80" y="568.80" width="17.4" height="83.00" fill="#9999ff" stroke="#1a1a4a" stroke-width="0.7"/><path d="M614.50 557.80 L620.70 553.30 V647.30 L614.50 651.80 Z" fill="#333399" stroke="#1a1a4a" stroke-width="0.7"/><path d="M597.10 557.80 L603.30 553.30 H620.70 L614.50 557.80 Z" fill="#6666dd" stroke="#1a1a4a" stroke-width="0.7"/><rect x="597.10" y="557.80" width="17.4" height="94.00" fill="#9999ff" stroke="#1a1a4a" stroke-width="0.7"/><path d="M658.50 527.50 L664.70 523.00 V647.30 L658.50 651.80 Z" fill="#333399" stroke="#1a1a4a" stroke-width="0.7"/><path d="M641.10 527.50 L647.30 523.00 H664.70 L658.50 527.50 Z" fill="#6666dd" stroke="#1a1a4a" stroke-width="0.7"/><rect x="641.10" y="527.50" width="17.4" height="124.30" fill="#9999ff" stroke="#1a1a4a" stroke-width="0.7"/><path d="M703.30 510.50 L709.50 506.00 V647.30 L703.30 651.80 Z" fill="#333399" stroke="#1a1a4a" stroke-width="0.7"/><path d="M685.90 510.50 L692.10 506.00 H709.50 L703.30 510.50 Z" fill="#6666dd" stroke="#1a1a4a" stroke-width="0.7"/><rect x="685.90" y="510.50" width="17.4" height="141.30" fill="#9999ff" stroke="#1a1a4a" stroke-width="0.7"/><path d="M747.80 471.40 L754.00 466.90 V647.30 L747.80 651.80 Z" fill="#333399" stroke="#1a1a4a" stroke-width="0.7"/><path d="M730.40 471.40 L736.60 466.90 H754.00 L747.80 471.40 Z" fill="#6666dd" stroke="#1a1a4a" stroke-width="0.7"/><rect x="730.40" y="471.40" width="17.4" height="180.40" fill="#9999ff" stroke="#1a1a4a" stroke-width="0.7"/><path d="M792.70 477.00 L798.90 472.50 V647.30 L792.70 651.80 Z" fill="#333399" stroke="#1a1a4a" stroke-width="0.7"/><path d="M775.30 477.00 L781.50 472.50 H798.90 L792.70 477.00 Z" fill="#6666dd" stroke="#1a1a4a" stroke-width="0.7"/><rect x="775.30" y="477.00" width="17.4" height="174.80" fill="#9999ff" stroke="#1a1a4a" stroke-width="0.7"/><text x="355" y="476.70" text-anchor="end" font-family="Liberation Sans" font-weight="bold" font-size="14.6" letter-spacing="1.35" fill="#000">100,000</text><text x="355" y="494.72" text-anchor="end" font-family="Liberation Sans" font-weight="bold" font-size="14.6" letter-spacing="1.35" fill="#000">90,000</text><text x="355" y="512.74" text-anchor="end" font-family="Liberation Sans" font-weight="bold" font-size="14.6" letter-spacing="1.35" fill="#000">80,000</text><text x="355" y="530.76" text-anchor="end" font-family="Liberation Sans" font-weight="bold" font-size="14.6" letter-spacing="1.35" fill="#000">70,000</text><text x="355" y="548.78" text-anchor="end" font-family="Liberation Sans" font-weight="bold" font-size="14.6" letter-spacing="1.35" fill="#000">60,000</text><text x="355" y="566.80" text-anchor="end" font-family="Liberation Sans" font-weight="bold" font-size="14.6" letter-spacing="1.35" fill="#000">50,000</text><text x="355" y="584.82" text-anchor="end" font-family="Liberation Sans" font-weight="bold" font-size="14.6" letter-spacing="1.35" fill="#000">40,000</text><text x="355" y="602.84" text-anchor="end" font-family="Liberation Sans" font-weight="bold" font-size="14.6" letter-spacing="1.35" fill="#000">30,000</text><text x="355" y="620.86" text-anchor="end" font-family="Liberation Sans" font-weight="bold" font-size="14.6" letter-spacing="1.35" fill="#000">20,000</text><text x="355" y="638.88" text-anchor="end" font-family="Liberation Sans" font-weight="bold" font-size="14.6" letter-spacing="1.35" fill="#000">10,000</text><text x="355" y="656.90" text-anchor="end" font-family="Liberation Sans" font-weight="bold" font-size="14.6" letter-spacing="1.35" fill="#000">0</text></svg>
<svg class="r" style="left:0;top:0" width="1200" height="800"><g font-family="Liberation Sans" font-size="17.4" fill="#ababab" stroke="#ababab" stroke-width="0.15"><text x="0" y="747" transform="translate(224.0 0) scale(0.9788 1)">This</text><text x="0" y="747" transform="translate(263.3 0) scale(1.0 1)">is</text><text x="0" y="747" transform="translate(281.811 0) scale(0.8889 1)">a</text><text x="0" y="747" transform="translate(295.792 0) scale(0.9041 1)">.PRVX</text><text x="0" y="747" transform="translate(348.9 0) scale(1.0636 1)">file</text><text x="0" y="747" transform="translate(378.276 0) scale(1.0243 1)">open</text><text x="0" y="747" transform="translate(423.592 0) scale(1.1083 1)">in</text><text x="0" y="747" transform="translate(442.969 0) scale(1.0308 1)">SoftMaker</text><text x="0" y="747" transform="translate(528.616 0) scale(1.0841 1)">Office</text><text x="0" y="747" transform="translate(583.38 0) scale(1.02 1)">Presentations</text><text x="0" y="747" transform="translate(697.6 0) scale(1.1 1)">2018.</text><text x="0" y="747" transform="translate(751.0 0) scale(1.0308 1)">©</text><text x="0" y="747" transform="translate(769.653 0) scale(1.0473 1)">FileInfo.com</text></g></svg>
<svg class="r" style="left:0;top:0" width="1200" height="800">
<rect x="190" y="757" width="745" height="15" fill="#f0f0f0"/>
<rect x="204" y="757" width="206" height="14.5" fill="#c4c4c4"/>
<path d="M198.5 761 L195 764.3 L198.5 767.6" stroke="#222" stroke-width="1.7" fill="none"/>
<path d="M925.5 761 L929 764.3 L925.5 767.6" stroke="#222" stroke-width="1.7" fill="none"/>
<rect x="935" y="190" width="15.5" height="582" fill="#f0f0f0"/>
<rect x="935.3" y="204" width="15" height="12" fill="#cdcdcd"/>
<path d="M939 199.5 L942.9 195.5 L946.8 199.5" stroke="#333" stroke-width="1.8" fill="none"/>
<path d="M939 681 L942.9 685 L946.8 681" stroke="#333" stroke-width="1.8" fill="none"/>
<path d="M938.2 695.2 H947.8" stroke="#111" stroke-width="1.7"/><path d="M938.2 703 L943 697.3 L947.8 703 Z" fill="#111"/>
<path d="M938.2 715.8 L943 710.8 L947.8 715.8 Z" fill="#111"/><path d="M938.2 718.2 H947.8" stroke="#111" stroke-width="1.7"/>
<rect x="937.8" y="731.2" width="6.5" height="5" fill="#fff" stroke="#111" stroke-width="1.1"/><rect x="940" y="728.8" width="6.5" height="5" fill="#fff" stroke="#111" stroke-width="1.1"/><rect x="942.2" y="726.6" width="6" height="4.5" fill="#fff" stroke="#111" stroke-width="1.1"/>
<path d="M938.2 744.2 H947.8" stroke="#111" stroke-width="1.7"/><path d="M938.2 746.8 L943 752.2 L947.8 746.8 Z" fill="#111"/>
<path d="M938.2 759.8 L943 765 L947.8 759.8 Z" fill="#111"/><path d="M938.2 767.2 H947.8" stroke="#111" stroke-width="1.7"/>
<path d="M950 190 V772" stroke="#cfcfcf" stroke-width="1.2"/>
</svg>
<div class="r" style="left:951px;top:190px;width:249px;height:582px;background:#f0f0f0"></div>
<svg class="r" style="left:0;top:0" width="1200" height="800">
<rect x="962.8" y="193.4" width="23.2" height="23" fill="#cce0f7" stroke="#7ab2f2" stroke-width="1"/>
<rect x="966" y="198.6" width="17.5" height="12.5" rx="2" fill="#fff" stroke="#888" stroke-width="1.5"/><rect x="968.5" y="201" width="12.5" height="1.5" fill="#ccc"/><rect x="968.5" y="203.5" width="5" height="5" fill="#ccc"/><rect x="975.5" y="203.5" width="5" height="5" fill="#ccc"/>
<rect x="991" y="198.6" width="17.5" height="12.5" rx="2" fill="#fff" stroke="#888" stroke-width="1.5"/><path d="M993.5 201.5 H1005 M993.5 204 H998 M993.5 206.5 H998 M993.5 209 H998" stroke="#999" stroke-width="1"/><path d="M1007 201 L1001 209 L999 213 L1003 211 L1009 203 Z" fill="#8ab0f0" stroke="#c0c0c0" stroke-width="0.6"/>
<rect x="1016" y="198.6" width="17.5" height="12.5" rx="2" fill="#fff" stroke="#888" stroke-width="1.5"/><path d="M1018.5 201.5 H1030 M1018.5 204 H1022 M1018.5 206.5 H1022 M1018.5 209 H1022" stroke="#999" stroke-width="1"/>
<defs><linearGradient id="rb" x1="0" x2="1"><stop offset="0" stop-color="#e00000"/><stop offset="0.25" stop-color="#ff9900"/><stop offset="0.45" stop-color="#ffee00"/><stop offset="0.65" stop-color="#22cc22"/><stop offset="0.85" stop-color="#2277ff"/><stop offset="1" stop-color="#8800cc"/></linearGradient></defs>
<rect x="1023" y="205.3" width="10" height="8" fill="url(#rb)" stroke="#6a4a4a" stroke-width="0.5"/>
<rect x="1041" y="198.6" width="17.5" height="12.5" rx="2" fill="#fff" stroke="#888" stroke-width="1.5"/><path d="M1043.5 201.5 H1056 M1043.5 204 H1056 M1043.5 206.5 H1050 M1043.5 209 H1050" stroke="#b8ccf0" stroke-width="1"/><rect x="1048" y="204.5" width="3" height="5" fill="#c8d8f4"/>
<rect x="1066.2" y="198.6" width="17.5" height="12.5" rx="1.5" fill="#fff" stroke="#888" stroke-width="1.5"/><path d="M1073.2 198.6 V211" stroke="#888" stroke-width="1.3"/><path d="M1066 205.2 H1072" stroke="#2e7bbf" stroke-width="1.5"/><path d="M1069.8 202.6 L1072.5 205.2 L1069.8 207.8" stroke="#2e7bbf" stroke-width="1.4" fill="none"/>
<polygon points="1100.50,198.80 1102.40,203.38 1107.35,203.78 1103.58,207.00 1104.73,211.82 1100.50,209.24 1096.27,211.82 1097.42,207.00 1093.65,203.78 1098.60,203.38" fill="#7ba4f2" stroke="#3f74c4" stroke-width="1.1" stroke-linejoin="round"/>
<path d="M1094.6 197.5 V204.5 M1091.1 201 H1098.1" stroke="#f5c000" stroke-width="2.2"/>
<polygon points="1124.80,198.10 1126.76,202.81 1131.84,203.21 1127.97,206.53 1129.15,211.49 1124.80,208.83 1120.45,211.49 1121.63,206.53 1117.76,203.21 1122.84,202.81" fill="#fde27a" stroke="#e8a800" stroke-width="1.4" stroke-linejoin="round"/>
<path d="M1186.5 203.3 H1194 L1190.25 207 Z" fill="#111"/>
<rect x="952.8" y="461" width="5.4" height="39.2" rx="2.7" fill="#fff" stroke="#a8a8a8" stroke-width="0.9"/><path d="M954.5 479 L956.4 480.5 L954.5 482" fill="#888"/>
<path d="M962 225.3 H1193" stroke="#dcdcdc" stroke-width="1"/>
</svg>
<div class="t" style="left:963.5px;top:236.68px;font-size:11.6px;line-height:11.6px;color:#111;font-weight:bold;">Slide layout</div>
<svg class="r" style="left:0;top:0" width="1200" height="800">
<defs><clipPath id="rl"><rect x="963" y="253.5" width="219" height="490.5"/></clipPath></defs>
<rect x="963" y="253.5" width="234" height="490.5" fill="#fff" stroke="#e4e4e4" stroke-width="1"/>
<g clip-path="url(#rl)">
<rect x="1014.5" y="258.5" width="116.5" height="103.8" fill="none" stroke="#3399ff" stroke-width="2"/>
<rect x="1022.7" y="267.2" width="105.5" height="90.5" fill="#000"/><rect x="1020.0" y="264.5" width="105.5" height="90.5" fill="#fff" stroke="#222" stroke-width="1.4"/><rect x="1031.6" y="294" width="79.8" height="18" fill="#fff" stroke="#8a8a8a" stroke-width="1"/><rect x="1036.6" y="300.8" width="70" height="5" fill="#808080"/><rect x="1038.5" y="315.5" width="66" height="19" fill="#fff" stroke="#8a8a8a" stroke-width="1"/><rect x="1044.8" y="322.8" width="54" height="4.2" fill="#b4b4b4"/>
<rect x="1022.7" y="374.0" width="105.5" height="90.5" fill="#000"/><rect x="1020.0" y="371.3" width="105.5" height="90.5" fill="#fff" stroke="#7a7a7a" stroke-width="1"/><rect x="1031.6" y="380.6" width="79.8" height="4.7" fill="#fff" stroke="#8a8a8a" stroke-width="1"/><path d="M1036 383 H1106" stroke="#b4b4b4" stroke-width="1"/><rect x="1031.6" y="388.9" width="82" height="55" fill="#fff" stroke="#8a8a8a" stroke-width="1"/><rect x="1034" y="391.5" width="2" height="2" fill="#555"/><path d="M1038 392.5 H1110" stroke="#b4b4b4" stroke-width="1.2"/><path d="M1038 397.5 H1106" stroke="#b4b4b4" stroke-width="1.2"/><rect x="1034" y="401.5" width="2" height="2" fill="#555"/><path d="M1038 402.5 H1110" stroke="#b4b4b4" stroke-width="1.2"/><path d="M1038 407.5 H1106" stroke="#b4b4b4" stroke-width="1.2"/>
<rect x="1022.7" y="480.2" width="105.5" height="90.5" fill="#000"/><rect x="1020.0" y="477.5" width="105.5" height="90.5" fill="#fff" stroke="#7a7a7a" stroke-width="1"/><rect x="1032.5" y="515.5" width="79" height="17.5" fill="#fff" stroke="#8a8a8a" stroke-width="1"/><path d="M1036 519 H1106" stroke="#b4b4b4" stroke-width="1.2"/><rect x="1032.5" y="533" width="79" height="15.5" fill="#fff" stroke="#8a8a8a" stroke-width="1"/><rect x="1037" y="539" width="69" height="4.5" fill="#808080"/>
<rect x="1022.7" y="586.5" width="105.5" height="90.5" fill="#000"/><rect x="1020.0" y="583.8" width="105.5" height="90.5" fill="#fff" stroke="#7a7a7a" stroke-width="1"/><rect x="1031.6" y="593" width="79.8" height="4.7" fill="#fff" stroke="#8a8a8a" stroke-width="1"/><path d="M1036 595.3 H1106" stroke="#b4b4b4" stroke-width="1"/><rect x="1031.6" y="606.2" width="27" height="27.6" fill="#fff" stroke="#8a8a8a" stroke-width="1"/><rect x="1061" y="606.2" width="26" height="27.6" fill="#fff" stroke="#8a8a8a" stroke-width="1"/><rect x="1034" y="609" width="2" height="2" fill="#555"/><path d="M1038 610 H1054" stroke="#b4b4b4" stroke-width="1.2"/><path d="M1038 615 H1050" stroke="#b4b4b4" stroke-width="1.2"/><rect x="1034" y="619" width="2" height="2" fill="#555"/><path d="M1038 620 H1054" stroke="#b4b4b4" stroke-width="1.2"/><path d="M1038 625 H1050" stroke="#b4b4b4" stroke-width="1.2"/><rect x="1063.5" y="609" width="2" height="2" fill="#555"/><path d="M1067.5 610 H1083.5" stroke="#b4b4b4" stroke-width="1.2"/><path d="M1067.5 615 H1079.5" stroke="#b4b4b4" stroke-width="1.2"/><rect x="1063.5" y="619" width="2" height="2" fill="#555"/><path d="M1067.5 620 H1083.5" stroke="#b4b4b4" stroke-width="1.2"/><path d="M1067.5 625 H1079.5" stroke="#b4b4b4" stroke-width="1.2"/>
<rect x="1022.7" y="692.2" width="105.5" height="90.5" fill="#000"/><rect x="1020.0" y="689.5" width="105.5" height="90.5" fill="#fff" stroke="#7a7a7a" stroke-width="1"/><rect x="1030" y="697.5" width="83.5" height="12.5" fill="#fff" stroke="#8a8a8a" stroke-width="1"/><rect x="1034.5" y="701" width="74" height="5" fill="#808080"/><rect x="1030" y="711.5" width="40" height="8" fill="#fff" stroke="#8a8a8a" stroke-width="1"/><rect x="1073.5" y="711.5" width="40" height="8" fill="#fff" stroke="#8a8a8a" stroke-width="1"/><rect x="1030" y="719.5" width="40" height="30" fill="#fff" stroke="#8a8a8a" stroke-width="1"/><rect x="1073.5" y="719.5" width="40" height="30" fill="#fff" stroke="#8a8a8a" stroke-width="1"/><rect x="1032" y="722.5" width="2" height="2" fill="#555"/><path d="M1036 723.5 H1068" stroke="#b4b4b4" stroke-width="1.2"/><path d="M1036 728.5 H1064" stroke="#b4b4b4" stroke-width="1.2"/><rect x="1032" y="732.5" width="2" height="2" fill="#555"/><path d="M1036 733.5 H1068" stroke="#b4b4b4" stroke-width="1.2"/><path d="M1036 738.5 H1064" stroke="#b4b4b4" stroke-width="1.2"/><rect x="1075.5" y="722.5" width="2" height="2" fill="#555"/><path d="M1079.5 723.5 H1111.5" stroke="#b4b4b4" stroke-width="1.2"/><path d="M1079.5 728.5 H1107.5" stroke="#b4b4b4" stroke-width="1.2"/><rect x="1075.5" y="732.5" width="2" height="2" fill="#555"/><path d="M1079.5 733.5 H1111.5" stroke="#b4b4b4" stroke-width="1.2"/><path d="M1079.5 738.5 H1107.5" stroke="#b4b4b4" stroke-width="1.2"/>
</g>
<rect x="1182" y="254" width="15" height="490" fill="#f0f0f0"/>
<rect x="1182" y="267.9" width="14.6" height="193.9" fill="#cdcdcd"/>
<path d="M1185.5 263 L1189.5 259 L1193.5 263" stroke="#333" stroke-width="1.8" fill="none"/>
<path d="M1185.5 736 L1189.5 740 L1193.5 736" stroke="#333" stroke-width="1.8" fill="none"/>
</svg>
<div class="t" style="left:964px;top:754.73px;font-size:11.9px;line-height:11.9px;color:#111;font-weight:normal;">Title slide</div>
<div class="r" style="left:0px;top:771px;width:1200px;height:29px;background:#f0f0f0;border-top:2px solid #d6d6d6;box-sizing:border-box"></div>
<div class="r" style="left:6.5px;top:776px;width:510.0px;height:18.5px;background:#fff;border:1px solid;border-color:#bdbdbd #dadada #d2d2d2 #bdbdbd;box-sizing:border-box"></div>
<div class="r" style="left:522.5px;top:776px;width:99.5px;height:18.5px;background:#fff;border:1px solid;border-color:#bdbdbd #dadada #d2d2d2 #bdbdbd;box-sizing:border-box"></div>
<div class="r" style="left:627px;top:776px;width:160px;height:18.5px;background:#fff;border:1px solid;border-color:#bdbdbd #dadada #d2d2d2 #bdbdbd;box-sizing:border-box"></div>
<div class="r" style="left:793.5px;top:776px;width:38.5px;height:18.5px;background:#fff;border:1px solid;border-color:#bdbdbd #dadada #d2d2d2 #bdbdbd;box-sizing:border-box"></div>
<div class="t" style="left:527px;top:780.23px;font-size:11.9px;line-height:11.9px;color:#111;font-weight:normal;">Slide 1 of 42</div>
<div class="t" style="left:632px;top:780.23px;font-size:11.9px;line-height:11.9px;color:#111;font-weight:normal;">Slide0</div>
<div class="t" style="left:612.8px;width:400px;text-align:center;top:780.23px;font-size:11.9px;line-height:11.9px;color:#111;font-weight:normal;">Ins</div>
<div class="t" style="left:1143.5px;top:780.44px;font-size:12px;line-height:12px;color:#222;font-weight:normal;">67%</div>
<svg class="r" style="left:0;top:0" width="1200" height="800">
<rect x="836.5" y="774.3" width="23" height="23.2" fill="#cce0f7" stroke="#7ab2f2" stroke-width="1"/>
<rect x="840" y="779.5" width="16.5" height="12.5" rx="1.5" fill="#fff" stroke="#777" stroke-width="1.5"/><path d="M842.5 782.5 H854 M842.5 785 H846.5 M842.5 787.5 H846.5 M842.5 790 H846.5" stroke="#999" stroke-width="1"/><rect x="848.5" y="784.5" width="5.5" height="6" fill="#bbb"/>
<rect x="865.5" y="778.3" width="6.5" height="6.5" rx="1" fill="#fff" stroke="#888" stroke-width="1.3"/>
<rect x="874" y="778.3" width="6.5" height="6.5" rx="1" fill="#fff" stroke="#888" stroke-width="1.3"/>
<rect x="865.5" y="787" width="6.5" height="6.5" rx="1" fill="#fff" stroke="#888" stroke-width="1.3"/>
<rect x="874" y="787" width="6.5" height="6.5" rx="1" fill="#fff" stroke="#888" stroke-width="1.3"/>
<path d="M889.5 779.5 H892 M889.5 782 H892 M889.5 788 H892 M889.5 790.5 H892 M889.5 793 H892" stroke="#999" stroke-width="1"/><rect x="895.5" y="779" width="11" height="9.5" rx="1" fill="#fff" stroke="#888" stroke-width="1.3"/><path d="M897.5 782 H904.5 M897.5 785 H900" stroke="#aaa" stroke-width="0.9"/>
<rect x="914.8" y="779.3" width="16.5" height="12.5" rx="1.5" fill="#fff" stroke="#888" stroke-width="1.3"/><path d="M917 782.5 H929 M917 785 H920 M917 787.5 H920" stroke="#aaa" stroke-width="1"/><path d="M922 785 H932.3 V790.5 L929.5 793.3 H922 Z" fill="#fde0a0" stroke="#d99a40" stroke-width="1"/>
<path d="M941.5 778.5 H956" stroke="#777" stroke-width="1.4"/><path d="M943 779 V787.5 H954.5 V779" fill="#fff" stroke="#888" stroke-width="1.2"/><path d="M948.8 787.5 V790.5 M943.5 792.5 H950" stroke="#888" stroke-width="1.3"/><path d="M951.5 786 L957.5 790 L951.5 794 Z" fill="#f5c000"/>
<path d="M964.5 785 L968.5 789 L972.5 785" stroke="#444" stroke-width="1.4" fill="none"/>
<path d="M985.5 785.3 H993" stroke="#888" stroke-width="1.2"/>
<path d="M998.5 785.3 H1110" stroke="#cfcfcf" stroke-width="1"/>
<path d="M1053.8 778 V792.5" stroke="#cfcfcf" stroke-width="1"/>
<circle cx="1033.5" cy="785.3" r="4.8" fill="#fff" stroke="#777" stroke-width="1.1"/>
<path d="M1115.5 785.3 H1123 M1119.25 781.5 V789" stroke="#888" stroke-width="1.2"/>
<path d="M1178.5 779 L1181 781.2 L1178.5 783.4 M1182.2 779 L1184.7 781.2 L1182.2 783.4" stroke="#555" stroke-width="1" fill="none"/>
</svg>
</body></html>
